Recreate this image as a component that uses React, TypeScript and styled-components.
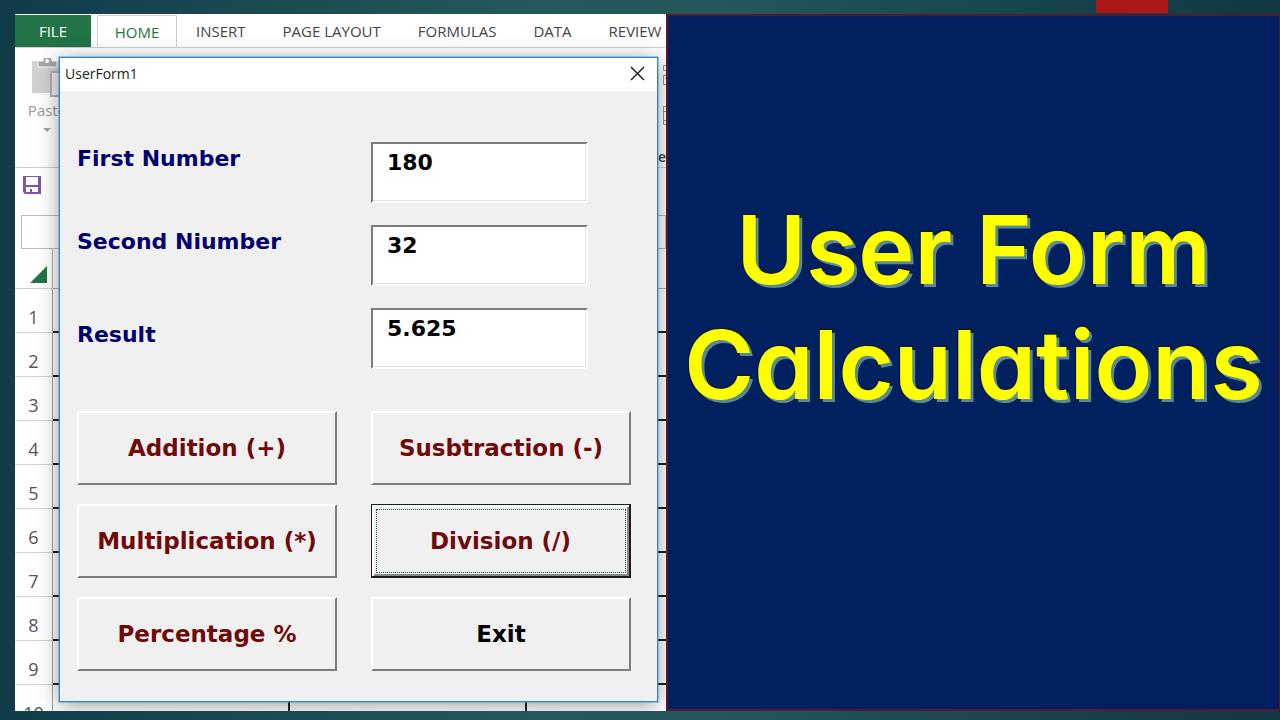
import React, { useState } from "react";
import styled, { createGlobalStyle, css } from "styled-components";

const GlobalStyle = createGlobalStyle`
  *, *::before, *::after { box-sizing: border-box; }
  body { margin: 0; }
  button, input { font: inherit; margin: 0; border-radius: 0; }
`;

const uiFont = `"Open Sans", "Noto Sans", sans-serif`;
const formFont = `"DejaVu Sans", Verdana, sans-serif`;

const Slide = styled.main`
  height: 100vh;
  display: flex;
  flex-direction: column;
  padding-bottom: 9px;
  overflow: hidden;
  font-family: ${uiFont};
  background: linear-gradient(90deg, #103c4a 0%, #25595b 42%, #24575b 56%, #15424b 84%, #113843 100%);
`;

const TopStrip = styled.div`
  flex: none;
  height: 14px;
  display: flex;
  justify-content: flex-end;
  padding-right: 112px;
`;

const RedTab = styled.div`
  width: 72px;
  height: 13px;
  background: #b01717;
`;

const Stage = styled.div`
  flex: 1;
  min-height: 0;
  display: grid;
  grid-template-columns: minmax(0, 651fr) minmax(0, 614fr);
  grid-template-rows: minmax(0, 1fr);
  padding-left: 15px;
`;

const Workbook = styled.section`
  position: relative;
  display: flex;
  flex-direction: column;
  overflow: hidden;
  background: #fff;
`;

const TabBar = styled.nav`
  flex: none;
  height: 34px;
  display: flex;
  overflow: hidden;
  border-bottom: 1px solid #cfcfcf;
  margin-bottom: -1px;
`;

const Tab = styled.button<{ $kind?: "file" | "active" }>`
  flex: none;
  padding: 1px 18px 0 19px;
  border: 0;
  background: transparent;
  color: #444;
  font-size: 15px;
  line-height: 32px;
  white-space: nowrap;
  ${(p) =>
    p.$kind === "file" &&
    css`
      width: 76px;
      margin-top: 1px;
      margin-right: 6px;
      padding: 0;
      background: #227447;
      color: #fff;
    `}
  ${(p) =>
    p.$kind === "active" &&
    css`
      width: 80px;
      margin-top: 1px;
      padding: 0;
      border: 1px solid #cfcfcf;
      border-bottom: 0;
      color: #227447;
      line-height: 30px;
    `}
`;

const Ribbon = styled.div`
  flex: none;
  height: 121px;
  display: flex;
  justify-content: space-between;
  padding-left: 8px;
  border-bottom: 1px solid #cfcfcf;
`;

const PasteButton = styled.button`
  display: flex;
  flex-direction: column;
  align-items: center;
  width: 48px;
  height: 96px;
  padding: 11px 0 0;
  border: 0;
  background: transparent;
  color: #9a9a9a;
  font-size: 15px;
  line-height: 24px;
`;

const PasteArrow = styled.svg`
  margin-top: 6px;
`;

const RibbonEdge = styled.div`
  display: flex;
  flex-direction: column;
  align-items: flex-end;
  justify-content: space-between;
  padding: 18px 0 0;
  color: #444;
  font-size: 14px;
  font-weight: 600;
  line-height: 20px;
`;

const QuickAccess = styled.div`
  flex: none;
  height: 47px;
  padding: 8px 8px 0;
`;

const IconButton = styled.button`
  display: block;
  padding: 0;
  border: 0;
  background: transparent;
  line-height: 0;
`;

const NameBox = styled.input`
  flex: none;
  height: 34px;
  margin-left: 6px;
  border: 1px solid #bdbdbd;
  background: #fff;
`;

const Sheet = styled.table`
  width: 100%;
  table-layout: fixed;
  border-collapse: separate;
  border-spacing: 0;
  font-size: 18px;
  color: #555;
`;

const Corner = styled.th`
  width: 38px;
  height: 40px;
  padding: 0 5px 5px 0;
  vertical-align: bottom;
  text-align: right;
  line-height: 0;
  border-right: 1px solid #b5b5b5;
  border-bottom: 1px solid #cfcfcf;
`;

const ColumnHead = styled.th<{ $width?: number }>`
  width: ${(p) => (p.$width ? `${p.$width}px` : "auto")};
  border-bottom: 1px solid #b5b5b5;
`;

const RowHead = styled.th`
  height: 44px;
  padding: 13px 0 1px;
  font-weight: 400;
  line-height: 28px;
  border-right: 1px solid #a5a5a5;
  border-bottom: 1px solid #d5d5d5;
`;

const Cell = styled.td`
  border-right: 2px solid #222;
  border-bottom: 2px solid #222;
  &:last-child { border-right: 0; }
`;

const Dialog = styled.form`
  position: absolute;
  top: 43px;
  left: 44px;
  right: 8px;
  border: 1px solid #3388cc;
  background: #f0f0f0;
  box-shadow: 0 0 0 1px rgba(60, 140, 198, 0.4), 0 3px 20px rgba(0, 0, 0, 0.4);
`;

const TitleBar = styled.header`
  height: 33px;
  display: flex;
  align-items: center;
  justify-content: space-between;
  padding: 0 12px 2px 5px;
  background: #fff;
  color: #222;
  font-size: 14px;
`;

const DialogBody = styled.div`
  display: flex;
  flex-direction: column;
  gap: 42px;
  padding: 51px 26px 30px 17px;
  font-family: ${formFont};
  font-size: 22px;
  font-weight: 700;
`;

const Fields = styled.div`
  display: grid;
  gap: 22px;
`;

const Field = styled.div`
  display: grid;
  grid-template-columns: 1fr 1fr;
  gap: 34px;
`;

const FieldLabel = styled.label<{ $low?: boolean }>`
  padding-top: ${(p) => (p.$low ? 13 : 3)}px;
  color: #000070;
  line-height: 28px;
  white-space: nowrap;
`;

const FieldInput = styled.input`
  width: 217px;
  max-width: 100%;
  height: 61px;
  padding: 3px 14px 23px;
  border: 2px solid;
  border-color: #7c7c7c #fafafa #fafafa #7c7c7c;
  box-shadow: inset -1px -1px 0 #e3e3e3;
  background: #fff;
  color: #000;
  outline: none;
`;

const Actions = styled.div`
  display: grid;
  grid-template-columns: 1fr 1fr;
  gap: 19px 34px;
  font-size: 23px;
`;

const ActionButton = styled.button<{ $dark?: boolean; $focused?: boolean }>`
  height: 74px;
  padding: 0;
  border: 2px solid;
  border-color: #fff #7c7c7c #7c7c7c #fff;
  background: #f0f0f0;
  color: ${(p) => (p.$dark ? "#000" : "#700a0a")};
  white-space: nowrap;
  outline: none;
  ${(p) =>
    p.$focused &&
    css`
      border-color: #1c1c1c;
      border-width: 1px 2px 2px 1px;
      box-shadow: inset 2px 2px 0 #fff, inset -2px -2px 0 #8a8a8a;
      outline: 1px dotted #1d5a4a;
      outline-offset: -6px;
    `}
`;

const Banner = styled.section`
  display: flex;
  align-items: center;
  justify-content: center;
  padding-bottom: 112px;
  border: 2px solid #5a1830;
  border-right-width: 1px;
  background: #00205f;
`;

const BannerTitle = styled.h1`
  margin: 0;
  color: #ff0;
  font-family: Inter, Lato, sans-serif;
  font-feature-settings: "cv11";
  font-size: 95px;
  font-weight: 600;
  line-height: 115px;
  text-align: center;
  -webkit-text-stroke: 2px #0a1a10;
  paint-order: stroke fill;
  text-shadow: 3px 3px 0 #5a8a92;
`;

const PasteIcon = () => (
  <svg width="34" height="40" viewBox="0 0 34 40" aria-hidden="true">
    <rect x="2" y="3" width="29" height="32" rx="1" fill="#d3d0d4" />
    <path d="M8 9V3h5V1l2-2h5l2 2v2h5v6z" fill="#a9a7aa" stroke="#fff" />
    <circle cx="17" cy="3" r="2" fill="#fff" />
    <rect x="21" y="14" width="20" height="24" fill="#f0ecf3" stroke="#b5adb9" strokeWidth="2" />
  </svg>
);

const SaveIcon = () => (
  <svg width="18" height="18" viewBox="0 0 18 18" aria-hidden="true">
    <path d="M0 0h18v18H2l-2-2z" fill="#7f57a6" />
    <path d="M3 1h12v8H3z" fill="#fff" />
    <path d="M3 11h12v5H3z" fill="#fff" />
    <path d="M7 13h2v4H7z" fill="#7f57a6" />
  </svg>
);

const EdgeIcons = () => (
  <svg width="3" height="62" viewBox="0 0 3 62" fill="none" stroke="#9a8f96" aria-hidden="true">
    <path d="M3 .5H.5v5H3M3 10.500H.5v9H3M3 13.500H2M3 41.500H.5v18H3M3 46.500H1M3 55.500H1" />
  </svg>
);

const tabs = ["INSERT", "PAGE LAYOUT", "FORMULAS", "DATA", "REVIEW"];
const rows = [1, 2, 3, 4, 5, 6, 7, 8, 9, 10];

const calculations: Record<string, (a: number, b: number) => number> = {
  "Addition (+)": (a, b) => a + b,
  "Susbtraction (-)": (a, b) => a - b,
  "Multiplication (*)": (a, b) => a * b,
  "Division (/)": (a, b) => a / b,
  "Percentage %": (a, b) => (a * b) / 100,
};

export default function App() {
  const [first, setFirst] = useState("180");
  const [second, setSecond] = useState("32");
  const [result, setResult] = useState("5.625");
  const [current, setCurrent] = useState("Division (/)");

  const calculate = (name: string) => {
    setCurrent(name);
    setResult(String(calculations[name](Number(first), Number(second))));
  };

  return (
    <>
      <GlobalStyle />
      <Slide>
        <TopStrip>
          <RedTab />
        </TopStrip>
        <Stage>
          <Workbook>
            <TabBar>
              <Tab $kind="file">FILE</Tab>
              <Tab $kind="active">HOME</Tab>
              {tabs.map((name) => (
                <Tab key={name}>{name}</Tab>
              ))}
            </TabBar>
            <Ribbon>
              <PasteButton>
                <PasteIcon />
                Paste
                <PasteArrow width="8" height="5" viewBox="0 0 8 5" aria-hidden="true">
                  <path d="M0 0h8L4 4z" fill="#a5a5a5" />
                </PasteArrow>
              </PasteButton>
              <RibbonEdge>
                <EdgeIcons />
                ne
              </RibbonEdge>
            </Ribbon>
            <QuickAccess>
              <IconButton aria-label="Save">
                <SaveIcon />
              </IconButton>
            </QuickAccess>
            <NameBox aria-label="Name box" />
            <Sheet>
              <thead>
                <tr>
                  <Corner>
                    <svg width="17" height="17" viewBox="0 0 17 17" aria-hidden="true">
                      <path d="M17 0v17H0z" fill="#227447" />
                    </svg>
                  </Corner>
                  <ColumnHead $width={237} />
                  <ColumnHead $width={237} />
                  <ColumnHead />
                </tr>
              </thead>
              <tbody>
                {rows.map((row) => (
                  <tr key={row}>
                    <RowHead scope="row">{row}</RowHead>
                    <Cell />
                    <Cell />
                    <Cell />
                  </tr>
                ))}
              </tbody>
            </Sheet>

            <Dialog onSubmit={(e) => e.preventDefault()}>
              <TitleBar>
                <span>UserForm1</span>
                <IconButton type="button" aria-label="Close">
                  <svg width="15" height="15" viewBox="0 0 15 15" aria-hidden="true">
                    <path d="M1 1l13 13M14 1L1 14" stroke="#222" strokeWidth="1.500" />
                  </svg>
                </IconButton>
              </TitleBar>
              <DialogBody>
                <Fields>
                  <Field>
                    <FieldLabel htmlFor="first">First Number</FieldLabel>
                    <FieldInput id="first" value={first} onChange={(e) => setFirst(e.target.value)} />
                  </Field>
                  <Field>
                    <FieldLabel htmlFor="second">Second Niumber</FieldLabel>
                    <FieldInput id="second" value={second} onChange={(e) => setSecond(e.target.value)} />
                  </Field>
                  <Field>
                    <FieldLabel htmlFor="result" $low>
                      Result
                    </FieldLabel>
                    <FieldInput id="result" value={result} readOnly />
                  </Field>
                </Fields>
                <Actions>
                  {Object.keys(calculations).map((name) => (
                    <ActionButton
                      key={name}
                      type="button"
                      $focused={name === current}
                      onClick={() => calculate(name)}
                    >
                      {name}
                    </ActionButton>
                  ))}
                  <ActionButton type="button" $dark>
                    Exit
                  </ActionButton>
                </Actions>
              </DialogBody>
            </Dialog>
          </Workbook>
          <Banner>
            <BannerTitle>
              User Form
              <br />
              Calculations
            </BannerTitle>
          </Banner>
        </Stage>
      </Slide>
    </>
  );
}
